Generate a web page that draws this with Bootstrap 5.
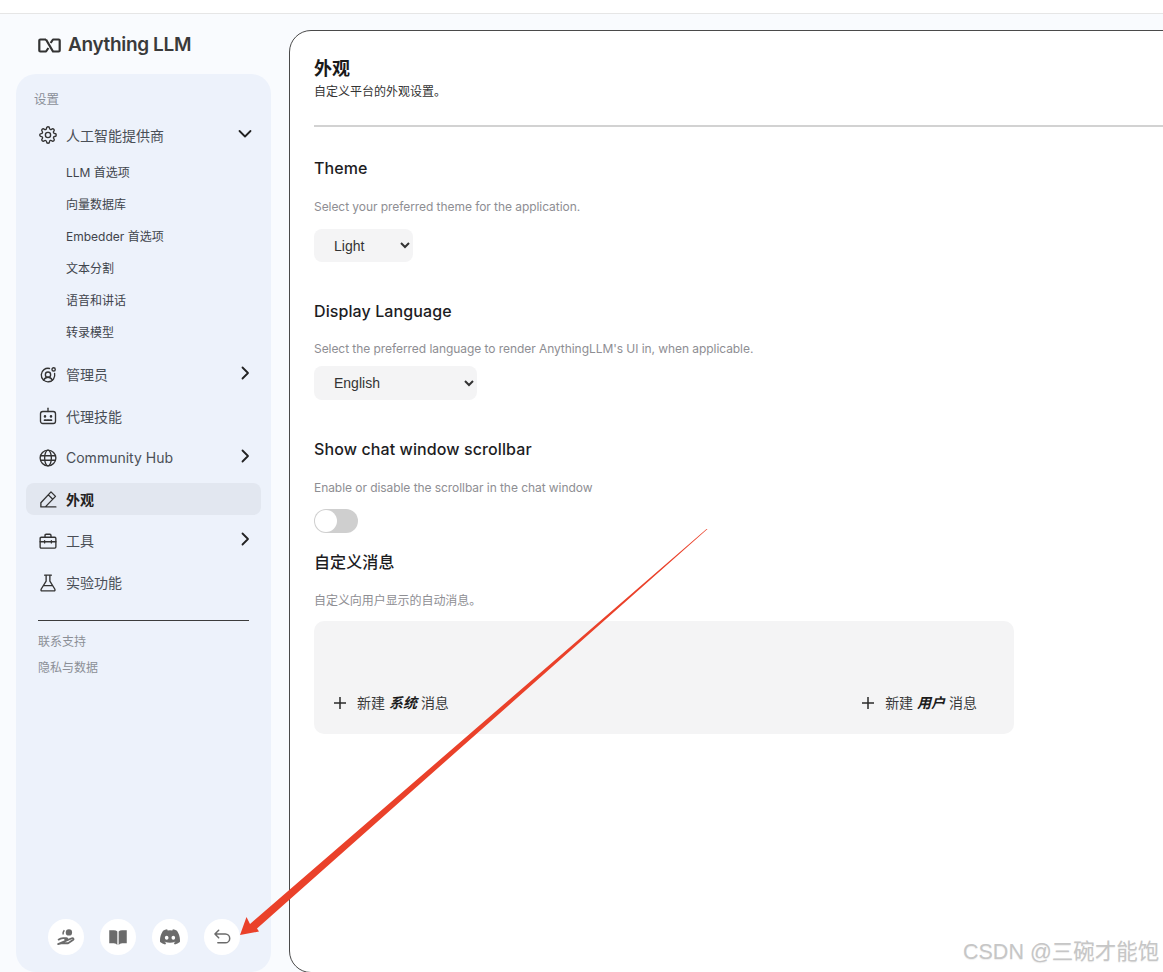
<!DOCTYPE html>
<html lang="zh">
<head>
<meta charset="utf-8">
<title>AnythingLLM</title>
<link href="https://cdn.jsdelivr.net/npm/bootstrap@5.3.0/dist/css/bootstrap.min.css" rel="stylesheet">
<style>
html,body{height:972px;overflow:hidden;}
body{background:#f9fbfe;font-family:"Inter","Noto Sans CJK SC",sans-serif;color:#222;position:relative;}
.top-strip{height:14px;background:#fff;border-bottom:1px solid #e6e6e6;}
.shell{height:958px;overflow:hidden;}
.side-col{width:289px;flex:none;}
.logo-row{height:60px;padding:3px 0 0 38px;gap:7px;color:#3a3a3a;font-weight:600;font-size:19px;letter-spacing:-.35px;}
.side-panel{margin-left:16px;width:255px;height:898px;background:#edf2fb;border-radius:20px;position:relative;padding-top:16px;}
.side-head{font-size:12.5px;color:#8a8f98;margin-left:18px;line-height:20px;margin-bottom:9px;}
.side-item{height:32px;margin:0 10px 9.6px;padding:0 12px;border-radius:8px;font-size:14px;color:#4a4f57;gap:9px;}
.side-item.is-on{background:#e2e7f0;color:#222;font-weight:600;}
.side-item svg.lead{width:18px;height:18px;flex:none;margin-left:1px;}
.side-item svg.chev{width:16px;height:16px;margin-left:auto;margin-right:-4px;margin-top:-3px;}
.sub-item{height:32px;margin-left:50px;font-size:12px;color:#3f444c;display:flex;align-items:center;}
.sub-wrap{margin-top:-4px;margin-bottom:10px;}
.side-rule{border-top:1px solid #3c3c3c;margin:21px 22px 8px;}
.foot-link{margin-left:22px;font-size:12px;color:#8b8f96;line-height:26px;}
.round-row{position:absolute;left:32px;bottom:17px;gap:16px;}
.round-btn{width:36px;height:36px;border-radius:50%;background:#fff;border:0;padding:0;display:flex;align-items:center;justify-content:center;}
.round-btn svg{width:20px;height:20px;}
.main-panel{flex:1;margin-top:16px;margin-right:-40px;height:943px;background:#fff;border:1px solid #4a4a4a;border-radius:22px;padding:27px 0 0 24px;}
.page-title{font-size:18px;font-weight:700;line-height:22px;color:#1a1a1a;margin:0;}
.page-sub{font-size:12px;line-height:16px;color:#333;margin:4px 0 0;}
.page-rule{border-top:2px solid #d2d2d2;margin-top:25px;}
.sec-title{font-size:16px;font-weight:500;letter-spacing:.1px;line-height:22px;color:#1d1d1f;margin:0;}
.sec-first{margin-top:30px;}
.sec-next{margin-top:38px;}
.sec-close{margin-top:18px;}
.sec-desc{font-size:12px;line-height:16px;color:#8e8e93;margin:20px 0 0;letter-spacing:-.06px;}
.sec-desc.desc-tight{margin-top:19px;}
.pick{display:block;background:#f4f4f5;border:0;border-radius:8px;font-family:"Liberation Sans",Arial,sans-serif;font-size:14px;color:#333;padding:0 8px 0 16px;}
.pick-a{width:99px;height:33px;margin-top:14px;}
.pick-b{width:163px;height:34px;margin-top:9px;}
.sw{width:44px;height:24px;border-radius:12px;background:#cfcfcf;position:relative;margin-top:13px;}
.sw::after{content:"";position:absolute;left:1px;top:1px;width:22px;height:22px;border-radius:50%;background:#fff;}
.msg-box{width:700px;height:113px;background:#f4f4f5;border-radius:10px;margin-top:12px;padding:0 37px 21px 19px;}
.msg-btn{gap:10px;font-size:14px;color:#3a3a3a;background:none;border:0;padding:0;line-height:20px;}
.msg-btn b{font-style:italic;font-weight:700;color:#1c1c1c;}
.msg-btn svg{width:14px;height:14px;}
.mark-over{position:absolute;left:0;top:0;width:1163px;height:972px;pointer-events:none;}
.stamp{position:absolute;left:963px;top:938px;font-family:"Liberation Sans","Noto Sans CJK SC",sans-serif;font-size:21.5px;line-height:28px;color:#c6c6c6;white-space:nowrap;text-shadow:0 1px 1px #ededed;}
</style>
</head>
<body>
<div class="top-strip"></div>
<div class="shell d-flex">
  <aside class="side-col">
    <div class="logo-row d-flex align-items-center">
      <svg width="23" height="15" viewBox="0 0 23 15" fill="none" stroke="#333" stroke-width="2.200" stroke-linejoin="round"><path d="M8 1.500H2.300Q1.300 1.500 1.300 2.500V12.500Q1.300 13.500 2.300 13.500H8L10.400 10"/><path d="M12.600 5L15 1.500H20.700Q21.700 1.500 21.700 2.500V12.500Q21.700 13.500 20.700 13.500H15L8 1.500"/></svg>
      <span>Anything LLM</span>
    </div>
    <div class="side-panel">
      <div class="side-head">设置</div>
      <div class="side-item d-flex align-items-center">
        <svg class="lead" viewBox="0 0 24 24" fill="none" stroke="#333" stroke-width="1.800"><circle cx="12" cy="12" r="3.500"/><path d="M19.400 15a1.650 1.650 0 0 0 .33 1.820l.06.06a2 2 0 0 1 0 2.830 2 2 0 0 1-2.830 0l-.06-.06a1.650 1.650 0 0 0-1.820-.33 1.650 1.650 0 0 0-1 1.510V21a2 2 0 0 1-2 2 2 2 0 0 1-2-2v-.09A1.650 1.650 0 0 0 9 19.400a1.650 1.650 0 0 0-1.820.33l-.06.06a2 2 0 0 1-2.830 0 2 2 0 0 1 0-2.830l.06-.06a1.650 1.650 0 0 0 .33-1.820 1.650 1.650 0 0 0-1.510-1H3a2 2 0 0 1-2-2 2 2 0 0 1 2-2h.09A1.650 1.650 0 0 0 4.600 9a1.650 1.650 0 0 0-.33-1.820l-.06-.06a2 2 0 0 1 0-2.830 2 2 0 0 1 2.830 0l.06.06a1.650 1.650 0 0 0 1.820.33H9a1.650 1.650 0 0 0 1-1.510V3a2 2 0 0 1 2-2 2 2 0 0 1 2 2v.09a1.650 1.650 0 0 0 1 1.510 1.650 1.650 0 0 0 1.820-.33l.06-.06a2 2 0 0 1 2.830 0 2 2 0 0 1 0 2.830l-.06.06a1.650 1.650 0 0 0-.33 1.820V9a1.650 1.650 0 0 0 1.510 1H21a2 2 0 0 1 2 2 2 2 0 0 1-2 2h-.09a1.650 1.650 0 0 0-1.510 1z"/></svg>
        <span>人工智能提供商</span>
        <svg class="chev" viewBox="0 0 16 16" fill="none" stroke="#222" stroke-width="1.800" stroke-linecap="round" stroke-linejoin="round"><path d="M2.500 5L8 10.500 13.500 5"/></svg>
      </div>
      <div class="sub-wrap">
        <div class="sub-item">LLM 首选项</div>
        <div class="sub-item">向量数据库</div>
        <div class="sub-item">Embedder 首选项</div>
        <div class="sub-item">文本分割</div>
        <div class="sub-item">语音和讲话</div>
        <div class="sub-item">转录模型</div>
      </div>
      <div class="side-item d-flex align-items-center">
        <svg class="lead" viewBox="0 0 24 24" fill="none" stroke="#333" stroke-width="1.800" stroke-linecap="round"><path d="M14 3.300A9 9 0 1 0 20.800 10"/><circle cx="12" cy="11.500" r="3.500"/><path d="M6 19c1.500-2.500 3.500-4 6-4s4.500 1.500 6 4"/><circle cx="19.500" cy="4.500" r="2.200"/></svg>
        <span>管理员</span>
        <svg class="chev" viewBox="0 0 16 16" fill="none" stroke="#222" stroke-width="1.800" stroke-linecap="round" stroke-linejoin="round"><path d="M5.500 2.500L11 8 5.500 13.500"/></svg>
      </div>
      <div class="side-item d-flex align-items-center">
        <svg class="lead" viewBox="0 0 24 24" fill="none" stroke="#333" stroke-width="1.800" stroke-linecap="round"><rect x="2" y="6" width="20" height="16" rx="3"/><path d="M12 6V1.500"/><path d="M7.500 17.500h9" stroke-width="2.600" stroke-dasharray="2 1.500"/><circle cx="8" cy="12.500" r=".8"/><circle cx="16" cy="12.500" r=".8"/></svg>
        <span>代理技能</span>
      </div>
      <div class="side-item d-flex align-items-center">
        <svg class="lead" viewBox="0 0 24 24" fill="none" stroke="#333" stroke-width="1.800"><circle cx="12" cy="12" r="10.500"/><ellipse cx="12" cy="12" rx="4.500" ry="10.500"/><path d="M2.500 9h19M2.500 15h19"/></svg>
        <span>Community Hub</span>
        <svg class="chev" viewBox="0 0 16 16" fill="none" stroke="#222" stroke-width="1.800" stroke-linecap="round" stroke-linejoin="round"><path d="M5.500 2.500L11 8 5.500 13.500"/></svg>
      </div>
      <div class="side-item is-on d-flex align-items-center">
        <svg class="lead" viewBox="0 0 24 24" fill="none" stroke="#333" stroke-width="1.800" stroke-linejoin="round" stroke-linecap="round"><path d="M2.500 22.500V17L16 2.500 22 8.500 8.500 22.500H2.500ZM12.500 6.500L18 12M22.500 22.500H8.500"/></svg>
        <span>外观</span>
      </div>
      <div class="side-item d-flex align-items-center">
        <svg class="lead" viewBox="0 0 24 24" fill="none" stroke="#333" stroke-width="1.800" stroke-linecap="round"><rect x="1.500" y="7" width="21" height="14.500" rx="1.500"/><path d="M8 7V4.500Q8 3 9.500 3h5Q16 3 16 4.500V7M1.500 13h21M7.500 11.500v3M16.500 11.500v3"/></svg>
        <span>工具</span>
        <svg class="chev" viewBox="0 0 16 16" fill="none" stroke="#222" stroke-width="1.800" stroke-linecap="round" stroke-linejoin="round"><path d="M5.500 2.500L11 8 5.500 13.500"/></svg>
      </div>
      <div class="side-item d-flex align-items-center">
        <svg class="lead" viewBox="0 0 24 24" fill="none" stroke="#333" stroke-width="1.800" stroke-linecap="round" stroke-linejoin="round"><path d="M7.500 1.500h9M9.500 1.500V9.500L3 20Q2 22.500 4 22.500H20Q22 22.500 21 20L14.500 9.500V1.500M6 15.500h12"/></svg>
        <span>实验功能</span>
      </div>
      <div class="side-rule"></div>
      <div class="foot-link">联系支持</div>
      <div class="foot-link">隐私与数据</div>
      <div class="round-row d-flex">
        <button class="round-btn" type="button" aria-label="support"><svg viewBox="0 0 24 24" fill="none" stroke="#6b6b6b"><circle cx="15.500" cy="6.500" r="3.800" fill="#6b6b6b" stroke="none"/><path d="M8.500 9a6 6 0 0 1 1.500-5" stroke-width="1.800"/><path d="M2.500 15.500c2-1.500 4-2.200 6-2.200h4c1.500 0 1.500 2.200 0 2.200H10M13 16l6-2.500c1.800-.6 2.800 1 1.300 2.200L14.500 19.500H6L2.500 20.500Z" stroke-width="2.200" stroke-linejoin="round"/></svg></button>
        <button class="round-btn" type="button" aria-label="docs"><svg viewBox="0 0 24 24" fill="#6b6b6b"><path d="M1.500 4H7Q10 4 11.200 5.500V21.500Q10 19.500 7 19.500H1.500ZM22.500 4H17Q14 4 12.800 5.500V21.500Q14 19.500 17 19.500H22.500Z"/></svg></button>
        <button class="round-btn" type="button" aria-label="discord"><svg viewBox="0 0 16 16" fill="#6b6b6b"><path d="M13.545 2.907a13.227 13.227 0 0 0-3.257-1.011.05.05 0 0 0-.052.025c-.141.25-.297.577-.406.833a12.19 12.19 0 0 0-3.658 0 8.258 8.258 0 0 0-.412-.833.051.051 0 0 0-.052-.025c-1.125.194-2.22.534-3.257 1.011a.041.041 0 0 0-.021.018C.356 6.024-.213 9.047.066 12.032c.001.014.01.028.021.037a13.276 13.276 0 0 0 3.995 2.02.05.05 0 0 0 .056-.019c.308-.42.582-.863.818-1.329a.05.05 0 0 0-.01-.059.051.051 0 0 0-.018-.011 8.875 8.875 0 0 1-1.248-.595.05.05 0 0 1-.02-.066.051.051 0 0 1 .015-.019c.084-.063.168-.129.248-.195a.05.05 0 0 1 .051-.007c2.619 1.196 5.454 1.196 8.041 0a.052.052 0 0 1 .053.007c.08.066.164.132.248.195a.051.051 0 0 1-.004.085 8.254 8.254 0 0 1-1.249.594.05.05 0 0 0-.03.03.052.052 0 0 0 .003.041c.24.465.515.909.817 1.329a.05.05 0 0 0 .056.019 13.235 13.235 0 0 0 4.001-2.02.049.049 0 0 0 .021-.037c.334-3.451-.559-6.449-2.366-9.106a.034.034 0 0 0-.02-.019Zm-8.198 7.307c-.789 0-1.438-.724-1.438-1.612 0-.889.637-1.613 1.438-1.613.807 0 1.45.73 1.438 1.613 0 .888-.637 1.612-1.438 1.612Zm5.316 0c-.788 0-1.438-.724-1.438-1.612 0-.889.637-1.613 1.438-1.613.807 0 1.451.73 1.438 1.613 0 .888-.631 1.612-1.438 1.612Z"/></svg></button>
        <button class="round-btn" type="button" aria-label="back"><svg viewBox="0 0 24 24" fill="none" stroke="#6b6b6b" stroke-width="1.800" stroke-linecap="round" stroke-linejoin="round"><path d="M8 4L3.500 8.500 8 13M3.500 8.500H16a5 5 0 0 1 0 10.500H7"/></svg></button>
      </div>
    </div>
  </aside>
  <main class="main-panel">
    <h1 class="page-title">外观</h1>
    <p class="page-sub">自定义平台的外观设置。</p>
    <div class="page-rule"></div>
    <h2 class="sec-title sec-first">Theme</h2>
    <p class="sec-desc">Select your preferred theme for the application.</p>
    <select class="pick pick-a"><option>Light</option></select>
    <h2 class="sec-title sec-next">Display Language</h2>
    <p class="sec-desc desc-tight">Select the preferred language to render AnythingLLM's UI in, when applicable.</p>
    <select class="pick pick-b"><option>English</option></select>
    <h2 class="sec-title sec-next">Show chat window scrollbar</h2>
    <p class="sec-desc">Enable or disable the scrollbar in the chat window</p>
    <div class="sw"></div>
    <h2 class="sec-title sec-close">自定义消息</h2>
    <p class="sec-desc">自定义向用户显示的自动消息。</p>
    <div class="msg-box d-flex align-items-end justify-content-between">
      <button class="msg-btn d-flex align-items-center" type="button"><svg viewBox="0 0 14 14" fill="none" stroke="#2a2a2a" stroke-width="1.500"><path d="M7 1v12M1 7h12"/></svg><span>新建 <b>系统</b> 消息</span></button>
      <button class="msg-btn d-flex align-items-center" type="button"><svg viewBox="0 0 14 14" fill="none" stroke="#2a2a2a" stroke-width="1.500"><path d="M7 1v12M1 7h12"/></svg><span>新建 <b>用户</b> 消息</span></button>
    </div>
  </main>
</div>
<svg class="mark-over" viewBox="0 0 1163 972" aria-hidden="true"><polygon fill="#ea412a" points="707.500,529 706.500,529 250,924 246.500,917 240,935 259,931.500 257,928.500"/></svg>
<div class="stamp">CSDN @三碗才能饱</div>
<script src="https://cdn.jsdelivr.net/npm/bootstrap@5.3.0/dist/js/bootstrap.bundle.min.js"></script>
</body>
</html>
